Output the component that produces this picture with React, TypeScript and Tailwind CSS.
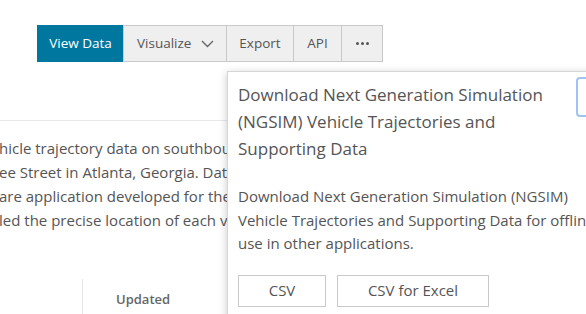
import React from 'react';

const font = { fontFamily: '"Open Sans", "Liberation Sans", sans-serif' };

const greyBtn =
  'h-[37px] flex items-center whitespace-nowrap bg-[#efefef] border border-[#c9c9c9] text-[13.5px] text-[#555]';

function ChevronDown() {
  return (
    <svg width="13" height="8" viewBox="0 0 13 8" fill="none" stroke="#666" strokeWidth="1.4">
      <path d="M1 1l5.5 5.5L12 1" />
    </svg>
  );
}

function Toolbar() {
  return (
    <div className="flex pl-[37px] pt-[25px]">
      <button className="h-[37px] bg-[#00779f] text-white text-[13.5px] whitespace-nowrap w-[87px] flex items-center justify-center">
        View Data
      </button>
      <button className={`${greyBtn} w-[104px] pl-[13px] gap-[10px] -ml-px`}>
        Visualize
        <ChevronDown />
      </button>
      <button className={`${greyBtn} w-[68px] justify-center -ml-px`}>Export</button>
      <button className={`${greyBtn} w-[49px] justify-center -ml-px`}>API</button>
      <button className={`${greyBtn} w-[42px] justify-center -ml-px`}>
        <span className="flex gap-[2px]">
          <span className="w-[3px] h-[3px] rounded-full bg-[#555]" />
          <span className="w-[3px] h-[3px] rounded-full bg-[#555]" />
          <span className="w-[3px] h-[3px] rounded-full bg-[#555]" />
        </span>
      </button>
    </div>
  );
}

function Popover() {
  return (
    <div className="absolute left-[227px] top-[71px] w-[380px] h-[260px] bg-white border border-[#d6d6d6] shadow-[0_2px_8px_rgba(0,0,0,0.22)]">
      <div className="flex">
        <h2 className="pl-[10px] pt-[9px] w-[340px] text-[17px] leading-[27px] text-[#555]">
          Download Next Generation Simulation (NGSIM) Vehicle Trajectories and Supporting Data
        </h2>
        <div className="ml-auto mt-[5px] w-[30px] h-[40px] border-2 border-[#9dc4f5] rounded-[4px]" />
      </div>
      <p className="pl-[10px] pt-[23px] text-[15px] leading-[23.5px] text-[#555] whitespace-nowrap">
        Download Next Generation Simulation (NGSIM)
        <br />
        Vehicle Trajectories and Supporting Data for offline
        <br />
        use in other applications.
      </p>
      <div className="flex gap-[11px] pl-[10px] pt-[19px]">
        <button className="w-[88px] h-[32px] border border-[#c9c9c9] text-[15px] text-[#555]">CSV</button>
        <button className="w-[152px] h-[32px] border border-[#c9c9c9] text-[15px] text-[#555]">
          CSV for Excel
        </button>
      </div>
    </div>
  );
}

export default function App() {
  return (
    <div className="relative w-[586px] h-[314px] overflow-hidden bg-white" style={font}>
      <Toolbar />
      <div className="mt-[58px] border-t border-[#e8e8e8] w-[227px]" />
      <div className="w-[227px] overflow-hidden pt-[15px] text-[15px] leading-[24px] text-[#555] whitespace-nowrap">
        <div className="-ml-[1px]">hicle trajectory data on southbound Peachtree</div>
        <div className="-ml-[1px]">ee Street in Atlanta, Georgia. Data were collected</div>
        <div className="-ml-[1px]">are application developed for the NGSIM program</div>
        <div className="-ml-[1px]">led the precise location of each vehicle within</div>
      </div>
      <div className="flex mt-[47px]">
        <div className="ml-[82px] border-l border-[#e5e5e5] h-[40px] pl-[33px] pt-[11px] text-[13px] font-semibold text-[#666]">
          Updated
        </div>
      </div>
      <Popover />
    </div>
  );
}
